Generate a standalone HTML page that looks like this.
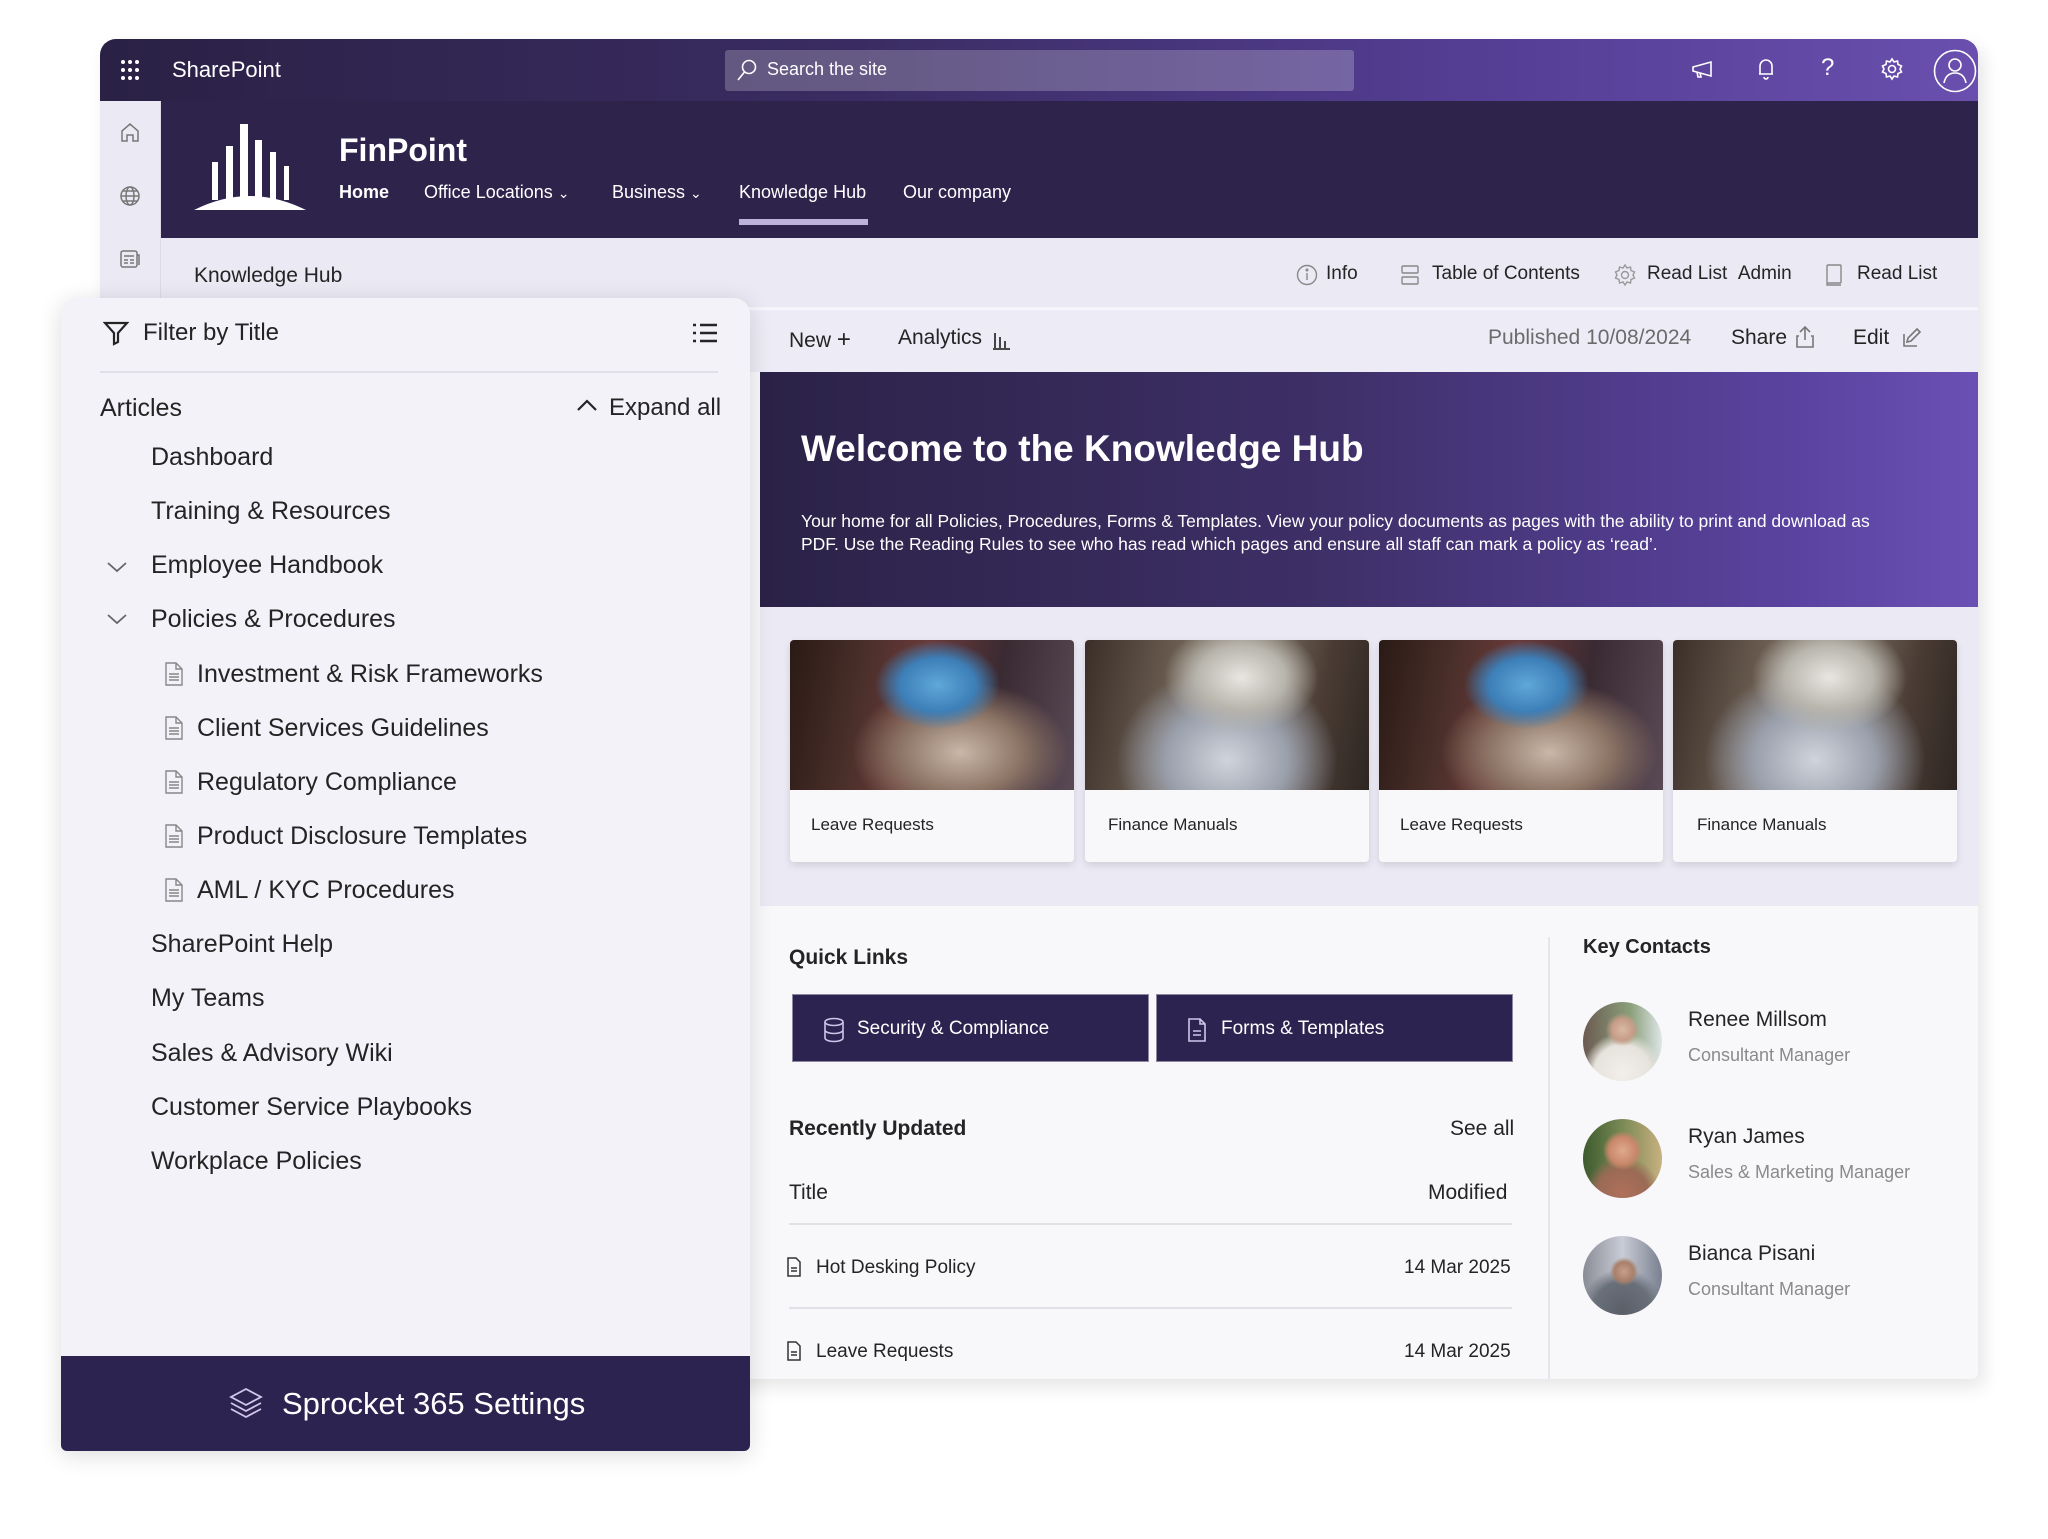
<!DOCTYPE html>
<html><head><meta charset="utf-8">
<style>
*{box-sizing:border-box;margin:0;padding:0}
body{width:2048px;height:1539px;background:#fff;position:relative;overflow:hidden;font-family:"Liberation Sans",Arial,sans-serif;color:#242424}
.a{position:absolute;white-space:nowrap}
.frame{position:absolute;left:100px;top:39px;width:1878px;height:1340px;border-radius:16px 16px 6px 6px;overflow:hidden;background:#f8f8fb;box-shadow:6px 8px 18px rgba(0,0,0,.10)}
.top{position:absolute;left:0;top:0;width:1878px;height:62px;background:linear-gradient(90deg,#2a2145 0%,#3a2c62 40%,#553f96 75%,#6a4fae 100%)}
.rail{position:absolute;left:0;top:62px;width:61px;height:1300px;background:#ebe9f3;border-right:1px solid #dcdae6}
.band{position:absolute;left:61px;top:62px;width:1817px;height:137px;background:#2d234b}
.khbar{position:absolute;left:61px;top:199px;width:1817px;height:71px;background:#ebe9f3;border-bottom:2px solid #f6f5fb}
.tool{position:absolute;left:61px;top:271px;width:1817px;height:62px;background:#edebf5}
.hero{position:absolute;left:660px;top:333px;width:1218px;height:235px;background:linear-gradient(90deg,#2b2247 0%,#3d2f66 45%,#5a43a0 85%,#6a50b3 100%)}
.cardsbg{position:absolute;left:660px;top:568px;width:1218px;height:299px;background:#ebe9f3}
.card{position:absolute;top:601px;width:284px;height:222px;background:#f8f8fb;border-radius:4px;box-shadow:0 3px 8px rgba(0,0,0,.12);overflow:hidden}
.card .img{height:150px}
.card .lb{position:absolute;left:21px;top:175px;font-size:17px;color:#242424}
.img1{background:radial-gradient(ellipse at 52% 30%,#5fa8d8 0,#3d7fb8 18%,transparent 30%),radial-gradient(ellipse at 60% 75%,#c9b7a8 0,#8d7566 25%,transparent 45%),linear-gradient(100deg,#2a1a15 0%,#4a2f2a 25%,#6a3a3a 45%,#3a2a32 70%,#5a4a55 100%)}
.img2{background:radial-gradient(ellipse at 55% 25%,#e8e6e0 0,#b8b5ad 20%,transparent 35%),radial-gradient(ellipse at 50% 80%,#d0d4dc 0,#9aa0ac 30%,transparent 55%),linear-gradient(100deg,#3a2e28 0%,#6a5c50 30%,#8a8070 50%,#4a3c34 80%,#2e2622 100%)}
.nav{font-size:18px;color:#fff;top:182px}
.kh{font-size:19px;color:#242424;top:263px}
.tb{font-size:21px;color:#242424;top:326px}
.item{font-size:25px;color:#242424;left:151px}
.sub{font-size:25px;color:#242424;left:197px}
.ql{position:absolute;top:994px;height:68px;width:357px;background:#2d2350;color:#fff;font-size:19px;border:1px solid #8d87a3}
.av{position:absolute;left:1583px;width:79px;height:79px;border-radius:50%}
.nm{left:1688px;font-size:21px;color:#242424}
.rl{left:1688px;font-size:18px;color:#8a8a8a}
</style></head><body>

<div class="frame">
  <div class="top"></div>
  <div class="rail"></div>
  <div class="band"></div>
  <div class="khbar"></div>
  <div class="tool"></div>
  <div class="hero"></div>
  <div class="cardsbg"></div>
</div>

<svg class="a" style="left:120px;top:59px" width="20" height="22" viewBox="0 0 20 22" fill="#fff"><circle cx="3" cy="3" r="2"/><circle cx="10" cy="3" r="2"/><circle cx="17" cy="3" r="2"/><circle cx="3" cy="11" r="2"/><circle cx="10" cy="11" r="2"/><circle cx="17" cy="11" r="2"/><circle cx="3" cy="19" r="2"/><circle cx="10" cy="19" r="2"/><circle cx="17" cy="19" r="2"/></svg>
<div class="a" style="left:172px;top:57px;font-size:22px;color:#fff">SharePoint</div>
<div class="a" style="left:725px;top:50px;width:629px;height:41px;border-radius:3px;background:rgba(255,255,255,.22)"></div>
<svg class="a" style="left:736px;top:59px" width="22" height="24" viewBox="0 0 22 24" fill="none" stroke="#fff" stroke-width="1.6"><circle cx="13" cy="8" r="6.5"/><path d="M8.5 13 L2 21"/></svg>
<div class="a" style="left:767px;top:59px;font-size:18px;color:#fff">Search the site</div>
<svg class="a" style="left:1690px;top:58px" width="26" height="24" viewBox="0 0 26 24" fill="none" stroke="#fff" stroke-width="1.6"><path d="M3 9 L21 4 V18 L3 13 Z M7 14 L8 19 H11 L10 15"/></svg>
<svg class="a" style="left:1755px;top:56px" width="22" height="26" viewBox="0 0 22 26" fill="none" stroke="#fff" stroke-width="1.6"><path d="M5 18 V10 a6 6 0 0 1 12 0 V18 H4 H18 M9 21 a2 2 0 0 0 4 0"/></svg>
<div class="a" style="left:1821px;top:54px;font-size:24px;color:#fff">?</div>
<svg class="a" style="left:1880px;top:57px" width="24" height="24" viewBox="0 0 24 24" fill="none" stroke="#fff" stroke-width="1.6"><circle cx="12" cy="12" r="3.5"/><path d="M12 2 L14 5 L17.5 4 L18 7.5 L21.5 9 L20 12 L21.5 15 L18 16.5 L17.5 20 L14 19 L12 22 L10 19 L6.5 20 L6 16.5 L2.5 15 L4 12 L2.5 9 L6 7.5 L6.5 4 L10 5 Z"/></svg>
<svg class="a" style="left:1933px;top:49px" width="44" height="44" viewBox="0 0 44 44" fill="none" stroke="#fff" stroke-width="1.6"><circle cx="22" cy="22" r="20.5"/><circle cx="22" cy="16" r="6"/><path d="M11 34 Q13 24 22 24 Q31 24 33 34"/></svg>

<svg class="a" style="left:119px;top:121px" width="22" height="22" viewBox="0 0 22 22" fill="none" stroke="#777" stroke-width="1.5"><path d="M3 10 L11 3 L19 10 V20 H14 V14 H8 V20 H3 Z"/></svg>
<svg class="a" style="left:119px;top:185px" width="22" height="22" viewBox="0 0 22 22" fill="none" stroke="#777" stroke-width="1.5"><circle cx="11" cy="11" r="9"/><ellipse cx="11" cy="11" rx="4" ry="9"/><path d="M2 11 H20 M4 6 H18 M4 16 H18"/></svg>
<svg class="a" style="left:119px;top:249px" width="22" height="20" viewBox="0 0 22 20" fill="none" stroke="#777" stroke-width="1.5"><rect x="2" y="2" width="16" height="16" rx="2"/><path d="M5 7 H15 M5 11 H9 M11 11 H15 M5 14 H9 M11 14 H15 M18 6 H20 V16"/></svg>

<svg class="a" style="left:192px;top:122px" width="116" height="90" viewBox="0 0 116 90" fill="#fff"><rect x="20" y="40" width="6" height="38"/><rect x="34" y="24" width="7" height="54"/><rect x="48" y="2" width="8" height="76"/><rect x="63" y="18" width="7" height="60"/><rect x="78" y="30" width="6" height="48"/><rect x="92" y="44" width="5" height="34"/><path d="M2 88 Q58 60 114 88 Z"/></svg>
<div class="a" style="left:339px;top:132px;font-size:32px;font-weight:bold;color:#fff">FinPoint</div>
<div class="a nav" style="left:339px;font-weight:bold">Home</div>
<div class="a nav" style="left:424px">Office Locations <span style="font-size:14px">&#8964;</span></div>
<div class="a nav" style="left:612px">Business <span style="font-size:14px">&#8964;</span></div>
<div class="a nav" style="left:739px">Knowledge Hub</div>
<div class="a" style="left:739px;top:219px;width:129px;height:6px;background:#bcb2da"></div>
<div class="a nav" style="left:903px">Our company</div>

<div class="a" style="left:194px;top:264px;font-size:21px;color:#242424">Knowledge Hub</div>
<svg class="a" style="left:1296px;top:264px" width="22" height="22" viewBox="0 0 22 22" fill="none" stroke="#888" stroke-width="1.4"><circle cx="11" cy="11" r="9.5"/><path d="M11 9 V16"/><circle cx="11" cy="6" r=".8" fill="#888"/></svg>
<div class="a kh" style="left:1326px">Info</div>
<svg class="a" style="left:1400px;top:264px" width="20" height="22" viewBox="0 0 20 22" fill="none" stroke="#888" stroke-width="1.4"><rect x="2" y="2" width="16" height="7" rx="1"/><rect x="2" y="13" width="16" height="7" rx="1"/></svg>
<div class="a kh" style="left:1432px">Table of Contents</div>
<svg class="a" style="left:1613px;top:263px" width="24" height="24" viewBox="0 0 24 24" fill="none" stroke="#999" stroke-width="1.4"><circle cx="12" cy="12" r="3.5"/><path d="M12 2 L14 5 L17.5 4 L18 7.5 L21.5 9 L20 12 L21.5 15 L18 16.5 L17.5 20 L14 19 L12 22 L10 19 L6.5 20 L6 16.5 L2.5 15 L4 12 L2.5 9 L6 7.5 L6.5 4 L10 5 Z"/></svg>
<div class="a kh" style="left:1647px">Read List &nbsp;Admin</div>
<svg class="a" style="left:1824px;top:263px" width="20" height="24" viewBox="0 0 20 24" fill="none" stroke="#888" stroke-width="1.4"><rect x="3" y="2" width="14" height="18" rx="1"/><path d="M3 20 V22 H17"/></svg>
<div class="a kh" style="left:1857px">Read List</div>

<div class="a tb" style="left:789px">New <span style="font-size:24px">+</span></div>
<div class="a tb" style="left:898px">Analytics</div>
<svg class="a" style="left:992px;top:329px" width="20" height="22" viewBox="0 0 20 22" fill="none" stroke="#333" stroke-width="1.8"><path d="M3 4 V19 M8 8 V19 M13 12 V19 M1 20 H18"/></svg>
<div class="a tb" style="left:1488px;color:#6b6b6b">Published 10/08/2024</div>
<div class="a tb" style="left:1731px">Share</div>
<svg class="a" style="left:1795px;top:325px" width="20" height="24" viewBox="0 0 20 24" fill="none" stroke="#777" stroke-width="1.6"><path d="M10 2 V15 M5 7 L10 2 L15 7 M4 11 H2 V22 H18 V11 H16"/></svg>
<div class="a tb" style="left:1853px">Edit</div>
<svg class="a" style="left:1901px;top:326px" width="22" height="22" viewBox="0 0 22 22" fill="none" stroke="#777" stroke-width="1.6"><path d="M6 16 L7 12 L16 3 L19 6 L10 15 Z M3 8 V20 H16"/></svg>

<div class="a" style="left:801px;top:428px;font-size:37px;font-weight:bold;color:#fff">Welcome to the Knowledge Hub</div>
<div class="a" style="left:801px;top:510px;font-size:17.5px;line-height:23px;color:#fff;white-space:normal;width:1100px">Your home for all Policies, Procedures, Forms &amp; Templates. View your policy documents as pages with the ability to print and download as PDF. Use the Reading Rules to see who has read which pages and ensure all staff can mark a policy as ‘read’.</div>

<div class="card" style="left:790px;top:640px"><div class="img img1"></div><div class="lb">Leave Requests</div></div>
<div class="card" style="left:1085px;top:640px"><div class="img img2"></div><div class="lb" style="left:23px">Finance Manuals</div></div>
<div class="card" style="left:1379px;top:640px"><div class="img img1"></div><div class="lb">Leave Requests</div></div>
<div class="card" style="left:1673px;top:640px"><div class="img img2"></div><div class="lb" style="left:24px">Finance Manuals</div></div>

<div class="a" style="left:789px;top:946px;font-size:21px;font-weight:bold">Quick Links</div>
<div class="ql" style="left:792px"><svg class="a" style="left:30px;top:22px" width="22" height="26" viewBox="0 0 22 26" fill="none" stroke="#cfc6ea" stroke-width="1.6"><ellipse cx="11" cy="5" rx="9" ry="3.5"/><path d="M2 5 V21 A9 3.5 0 0 0 20 21 V5 M2 13 A9 3.5 0 0 0 20 13"/></svg><span class="a" style="left:64px;top:23px">Security &amp; Compliance</span></div>
<div class="ql" style="left:1156px"><svg class="a" style="left:30px;top:22px" width="20" height="26" viewBox="0 0 20 26" fill="none" stroke="#cfc6ea" stroke-width="1.6"><path d="M2 2 H13 L18 7 V24 H2 Z M13 2 V7 H18 M6 14 H14 M6 18 H14"/></svg><span class="a" style="left:64px;top:23px">Forms &amp; Templates</span></div>

<div class="a" style="left:789px;top:1117px;font-size:21px;font-weight:bold">Recently Updated</div>
<div class="a" style="left:1450px;top:1117px;font-size:21px">See all</div>
<div class="a" style="left:789px;top:1181px;font-size:21px">Title</div>
<div class="a" style="left:1428px;top:1181px;font-size:21px">Modified</div>
<div class="a" style="left:789px;top:1223px;width:723px;height:2px;background:#e2e1e8"></div>
<svg class="a" style="left:786px;top:1257px" width="16" height="20" viewBox="0 0 16 20" fill="none" stroke="#333" stroke-width="1.5"><path d="M2 1 H10 L14 5 V19 H2 Z M5 11 H11 M5 14 H11"/></svg>
<div class="a" style="left:816px;top:1257px;font-size:19px">Hot Desking Policy</div>
<div class="a" style="left:1404px;top:1257px;font-size:19px">14 Mar 2025</div>
<div class="a" style="left:789px;top:1307px;width:723px;height:2px;background:#e2e1e8"></div>
<svg class="a" style="left:786px;top:1341px" width="16" height="20" viewBox="0 0 16 20" fill="none" stroke="#333" stroke-width="1.5"><path d="M2 1 H10 L14 5 V19 H2 Z M5 11 H11 M5 14 H11"/></svg>
<div class="a" style="left:816px;top:1341px;font-size:19px">Leave Requests</div>
<div class="a" style="left:1404px;top:1341px;font-size:19px">14 Mar 2025</div>

<div class="a" style="left:1548px;top:937px;width:2px;height:442px;background:#e6e5ec"></div>

<div class="a" style="left:1583px;top:936px;font-size:20px;font-weight:bold">Key Contacts</div>
<div class="av" style="top:1002px;background:radial-gradient(circle at 50% 35%,#d9b9a6 0,#c79d88 16%,transparent 26%),radial-gradient(circle at 50% 90%,#f2efea 0,#e6e2dc 35%,transparent 50%),linear-gradient(90deg,#6b5a52,#8aa07a 60%,#dfe6e8)"></div>
<div class="a nm" style="top:1008px">Renee Millsom</div>
<div class="a rl" style="top:1045px">Consultant Manager</div>
<div class="av" style="top:1119px;background:radial-gradient(circle at 50% 40%,#e0a98c 0,#c9876a 22%,transparent 32%),radial-gradient(circle at 50% 95%,#b0705a 0,#9a6a55 30%,transparent 45%),linear-gradient(90deg,#3d5a2e,#7a8a55 50%,#c9b080)"></div>
<div class="a nm" style="top:1125px">Ryan James</div>
<div class="a rl" style="top:1162px">Sales &amp; Marketing Manager</div>
<div class="av" style="top:1236px;background:radial-gradient(circle at 52% 45%,#c8a08a 0,#a8806a 16%,transparent 24%),radial-gradient(circle at 50% 95%,#5a5f68 0,#6a707a 35%,transparent 50%),linear-gradient(90deg,#8a8c95,#c9ccd6 50%,#7a8090)"></div>
<div class="a nm" style="top:1242px">Bianca Pisani</div>
<div class="a rl" style="top:1279px">Consultant Manager</div>

<div class="a" style="left:61px;top:298px;width:689px;height:1153px;background:#f3f2f9;border-radius:16px 16px 6px 6px;box-shadow:0 4px 24px rgba(0,0,0,.14);overflow:hidden">
  <div class="a" style="left:0;top:1058px;width:689px;height:95px;background:#2d2350"></div>
</div>
<svg class="a" style="left:103px;top:320px" width="26" height="26" viewBox="0 0 26 26" fill="none" stroke="#242424" stroke-width="2.2"><path d="M2 3 H24 L15 13 V22 L11 24 V13 Z"/></svg>
<div class="a" style="left:143px;top:319px;font-size:24px">Filter by Title</div>
<svg class="a" style="left:692px;top:323px" width="26" height="20" viewBox="0 0 26 20" fill="none" stroke="#242424" stroke-width="2.4"><path d="M1 2 H4 M8 2 H25 M1 10 H4 M8 10 H25 M1 18 H4 M8 18 H25"/></svg>
<div class="a" style="left:100px;top:371px;width:618px;height:2px;background:#e0dfe7"></div>
<div class="a" style="left:100px;top:394px;font-size:25px">Articles</div>
<svg class="a" style="left:576px;top:398px" width="22" height="14" viewBox="0 0 22 14" fill="none" stroke="#242424" stroke-width="2.2"><path d="M2 12 L11 3 L20 12"/></svg>
<div class="a" style="left:609px;top:394px;font-size:24px">Expand all</div>
<div class="a item" style="top:443px">Dashboard</div>
<div class="a item" style="top:497px">Training &amp; Resources</div>
<svg class="a" style="left:106px;top:561px" width="22" height="12" viewBox="0 0 22 12" fill="none" stroke="#666" stroke-width="1.8"><path d="M2 2 L11 10 L20 2"/></svg>
<div class="a item" style="top:551px">Employee Handbook</div>
<svg class="a" style="left:106px;top:613px" width="22" height="12" viewBox="0 0 22 12" fill="none" stroke="#666" stroke-width="1.8"><path d="M2 2 L11 10 L20 2"/></svg>
<div class="a item" style="top:605px">Policies &amp; Procedures</div>
<svg class="a" style="left:164px;top:662px" width="20" height="24" viewBox="0 0 20 24" fill="none" stroke="#888" stroke-width="1.4"><path d="M2 1 H12 L18 7 V23 H2 Z M12 1 V7 H18 M5 12 H15 M5 15 H15 M5 18 H15"/></svg>
<div class="a sub" style="top:660px">Investment &amp; Risk Frameworks</div>
<svg class="a" style="left:164px;top:716px" width="20" height="24" viewBox="0 0 20 24" fill="none" stroke="#888" stroke-width="1.4"><path d="M2 1 H12 L18 7 V23 H2 Z M12 1 V7 H18 M5 12 H15 M5 15 H15 M5 18 H15"/></svg>
<div class="a sub" style="top:714px">Client Services Guidelines</div>
<svg class="a" style="left:164px;top:770px" width="20" height="24" viewBox="0 0 20 24" fill="none" stroke="#888" stroke-width="1.4"><path d="M2 1 H12 L18 7 V23 H2 Z M12 1 V7 H18 M5 12 H15 M5 15 H15 M5 18 H15"/></svg>
<div class="a sub" style="top:768px">Regulatory Compliance</div>
<svg class="a" style="left:164px;top:824px" width="20" height="24" viewBox="0 0 20 24" fill="none" stroke="#888" stroke-width="1.4"><path d="M2 1 H12 L18 7 V23 H2 Z M12 1 V7 H18 M5 12 H15 M5 15 H15 M5 18 H15"/></svg>
<div class="a sub" style="top:822px">Product Disclosure Templates</div>
<svg class="a" style="left:164px;top:878px" width="20" height="24" viewBox="0 0 20 24" fill="none" stroke="#888" stroke-width="1.4"><path d="M2 1 H12 L18 7 V23 H2 Z M12 1 V7 H18 M5 12 H15 M5 15 H15 M5 18 H15"/></svg>
<div class="a sub" style="top:876px">AML / KYC Procedures</div>
<div class="a item" style="top:930px">SharePoint Help</div>
<div class="a item" style="top:984px">My Teams</div>
<div class="a item" style="top:1039px">Sales &amp; Advisory Wiki</div>
<div class="a item" style="top:1093px">Customer Service Playbooks</div>
<div class="a item" style="top:1147px">Workplace Policies</div>

<svg class="a" style="left:228px;top:1386px" width="36" height="34" viewBox="0 0 36 34" fill="none" stroke="#cfc6ea" stroke-width="1.8"><path d="M18 3 L33 11 L18 19 L3 11 Z M3 17 L18 25 L33 17 M3 23 L18 31 L33 23"/></svg>
<div class="a" style="left:282px;top:1386px;font-size:31px;color:#fff">Sprocket 365 Settings</div>

</body></html>
